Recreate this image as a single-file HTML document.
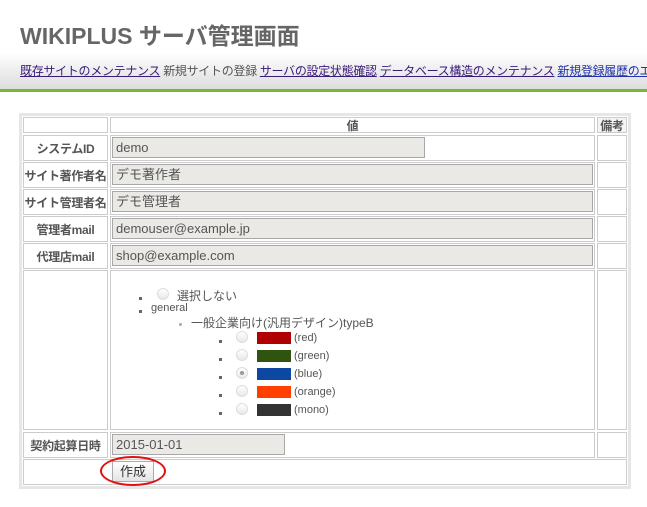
<!DOCTYPE html>
<html><head><meta charset="utf-8"><style>
*{margin:0;padding:0;box-sizing:border-box}
body{width:647px;height:507px;background:#fff;position:relative;overflow:hidden;font-family:"Liberation Sans","Noto Sans CJK JP",sans-serif;color:#444}
.a{position:absolute}
h1{position:absolute;left:20px;top:17px;font-size:23px;font-weight:bold;color:#666;white-space:nowrap;letter-spacing:0}
.hdr{position:absolute;left:0;top:52px;width:647px;height:37px;background:linear-gradient(#fff,#ddd)}
.grn{position:absolute;left:0;top:89px;width:647px;height:3px;background:#7ab833}
.nav{position:absolute;left:20px;top:62px;width:627px;overflow:hidden;font-size:12px;white-space:nowrap;color:#555;letter-spacing:-0.3px}
.nav a{color:#3a1a7a;text-decoration:underline}
.c{position:absolute;border:1px solid #ccc;background:#fff}
.lb{font-size:12px;font-weight:bold;color:#555;display:flex;align-items:center;justify-content:center;white-space:nowrap;letter-spacing:-0.3px}
.in{position:absolute;background:#ebe9e5;border:1px solid #a8a8a8;font-size:13px;color:#555;padding-left:3px;line-height:19px}
.rad{position:absolute;width:12px;height:12px;border-radius:50%;border:1px solid #ddd;background:linear-gradient(#fff,#e8e8e8)}
.t{position:absolute;font-size:11px;color:#555;white-space:nowrap}
.b{position:absolute;width:3px;height:3px;background:#666}
.sw{position:absolute;width:34px;height:12px}
</style></head><body>
<h1>WIKIPLUS サーバ管理画面</h1>
<div class="hdr"></div><div class="grn"></div>
<div class="nav"><a>既存サイトのメンテナンス</a> 新規サイトの登録 <a>サーバの設定状態確認</a> <a>データベース構造のメンテナンス</a> <a style="color:#2233aa">新規登録履歴のエクスポート</a></div>

<div class="a" style="left:19px;top:113px;width:612px;height:376px;border:3px solid #e6e6e6"></div>
<div class="c" style="left:23px;top:117px;width:85px;height:16px"></div>
<div class="c lb" style="left:110px;top:117px;width:485px;height:16px">値</div>
<div class="c lb" style="left:597px;top:117px;width:30px;height:16px;background:#f4f4f4">備考</div>

<div class="c lb" style="left:23px;top:135px;width:85px;height:26px">システムID</div>
<div class="c" style="left:110px;top:135px;width:485px;height:26px"></div>
<div class="c" style="left:597px;top:135px;width:30px;height:26px"></div>
<div class="in" style="left:112px;top:137px;width:313px;height:21px">demo</div>

<div class="c lb" style="left:23px;top:162px;width:85px;height:26px">サイト著作者名</div>
<div class="c" style="left:110px;top:162px;width:485px;height:26px"></div>
<div class="c" style="left:597px;top:162px;width:30px;height:26px"></div>
<div class="in" style="left:112px;top:164px;width:481px;height:21px">デモ著作者</div>

<div class="c lb" style="left:23px;top:189px;width:85px;height:26px">サイト管理者名</div>
<div class="c" style="left:110px;top:189px;width:485px;height:26px"></div>
<div class="c" style="left:597px;top:189px;width:30px;height:26px"></div>
<div class="in" style="left:112px;top:191px;width:481px;height:21px">デモ管理者</div>

<div class="c lb" style="left:23px;top:216px;width:85px;height:26px">管理者mail</div>
<div class="c" style="left:110px;top:216px;width:485px;height:26px"></div>
<div class="c" style="left:597px;top:216px;width:30px;height:26px"></div>
<div class="in" style="left:112px;top:218px;width:481px;height:21px">demouser@example.jp</div>

<div class="c lb" style="left:23px;top:243px;width:85px;height:26px">代理店mail</div>
<div class="c" style="left:110px;top:243px;width:485px;height:26px"></div>
<div class="c" style="left:597px;top:243px;width:30px;height:26px"></div>
<div class="in" style="left:112px;top:245px;width:481px;height:21px">shop@example.com</div>

<div class="c" style="left:23px;top:270px;width:85px;height:160px"></div>
<div class="c" style="left:110px;top:270px;width:485px;height:160px"></div>
<div class="c" style="left:597px;top:270px;width:30px;height:160px"></div>
<div class="b" style="left:139px;top:297px"></div><div class="rad" style="left:157px;top:288px"></div><div class="t" style="left:177px;top:287px;font-size:12px">選択しない</div>
<div class="b" style="left:139px;top:310px"></div><div class="t" style="left:151px;top:302px">general</div>
<div class="b" style="left:179px;top:323px;border-radius:50%;background:#aaa"></div><div class="t" style="left:191px;top:314px;font-size:12px">一般企業向け(汎用デザイン)typeB</div>
<div class="b" style="left:219px;top:340px"></div><div class="rad" style="left:236px;top:331px"></div><div class="sw" style="left:257px;top:332px;background:#b00000"></div><div class="t" style="left:294px;top:332px">(red)</div>
<div class="b" style="left:219px;top:358px"></div><div class="rad" style="left:236px;top:349px"></div><div class="sw" style="left:257px;top:350px;background:#2e5410"></div><div class="t" style="left:294px;top:350px">(green)</div>
<div class="b" style="left:219px;top:376px"></div><div class="rad" style="left:236px;top:367px"></div><div class="a" style="left:240px;top:371px;width:4px;height:4px;border-radius:50%;background:#999"></div><div class="sw" style="left:257px;top:368px;background:#0c47a1"></div><div class="t" style="left:294px;top:368px">(blue)</div>
<div class="b" style="left:219px;top:394px"></div><div class="rad" style="left:236px;top:385px"></div><div class="sw" style="left:257px;top:386px;background:#ff4000"></div><div class="t" style="left:294px;top:386px">(orange)</div>
<div class="b" style="left:219px;top:412px"></div><div class="rad" style="left:236px;top:403px"></div><div class="sw" style="left:257px;top:404px;background:#333"></div><div class="t" style="left:294px;top:404px">(mono)</div>

<div class="c lb" style="left:23px;top:432px;width:85px;height:26px">契約起算日時</div>
<div class="c" style="left:110px;top:432px;width:485px;height:26px"></div>
<div class="c" style="left:597px;top:432px;width:30px;height:26px"></div>
<div class="in" style="left:112px;top:434px;width:173px;height:21px">2015-01-01</div>

<div class="c" style="left:23px;top:459px;width:604px;height:26px"></div>
<div class="a" style="left:112px;top:461px;width:42px;height:21px;border:1px solid #aaa;background:linear-gradient(#fff,#e4e4e4);font-size:13px;color:#333;text-align:center;line-height:19px">作成</div>
<div class="a" style="left:100px;top:456px;width:66px;height:30px;border:2.5px solid #e01010;border-radius:50%"></div>
</body></html>
